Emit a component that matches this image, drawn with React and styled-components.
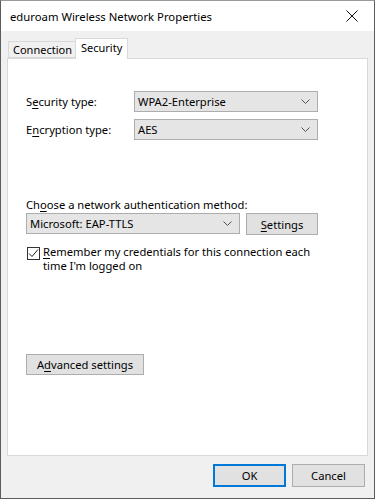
import React, { useState } from 'react';
import styled, { createGlobalStyle } from 'styled-components';

const Global = createGlobalStyle`
  html, body {
    margin: 0;
    padding: 0;
    background: #ffffff;
  }
  * {
    box-sizing: border-box;
  }
`;

const font = `'Noto Sans', 'Open Sans', sans-serif`;

const Window = styled.div`
  display: flex;
  flex-direction: column;

  width: 375px;
  height: 499px;
  border: 1px solid #5c5c5c;
  border-top-color: #9a9a9a;
  background: #f0f0f0;
  font-family: ${font};
  font-size: 11.2px;
  line-height: 15px;
  color: #000;
`;

const TitleBar = {
  Layout: styled.div`
    display: flex;
    align-items: center;
    justify-content: space-between;

    height: 30px;
    padding: 0 8px 0 9px;
    background: #ffffff;
  `,

  Text: styled.span`
    font-size: 11.3px;
  `,

  Close: styled.div`
    display: flex;
    align-items: center;
    justify-content: center;

    width: 28px;
    height: 28px;
  `,
};

const Body = styled.div`
  display: flex;
  flex-direction: column;

  flex: 1;
  padding: 7px 6px 0 6px;
`;

const Tabs = styled.div`
  display: flex;
  align-items: flex-end;

  height: 20px;
  padding-left: 1px;
`;

const Tab = styled.div`
  position: relative;
  z-index: ${({ active }) => (active ? 2 : 1)};

  height: ${({ active }) => (active ? '21px' : '17px')};
  margin-bottom: ${({ active }) => (active ? '-1px' : '0')};
  margin-left: ${({ active }) => (active ? '-1px' : '0')};
  padding: ${({ active }) => (active ? '1px 5px 0 5px' : '0 3px 0 4px')};
  border: 1px solid #d9d9d9;
  border-bottom: ${({ active }) => (active ? 'none' : '1px solid #d9d9d9')};
  background: ${({ active }) => (active ? '#ffffff' : '#f0f0f0')};
  font-size: 11px;
`;

const Panel = styled.div`
  display: flex;
  flex-direction: column;

  height: 398px;
  padding: 32px 0 0 18px;
  border: 1px solid #d9d9d9;
  background: #ffffff;
`;

const Grid = styled.div`
  display: grid;
  grid-template-columns: 108px 184px;
  row-gap: 7px;
  align-items: center;
`;

const Select = {
  Box: styled.div`
    display: flex;
    align-items: center;
    justify-content: space-between;

    width: ${({ width }) => width}px;
    height: 21px;
    padding: 0 7px 0 3px;
    border: 1px solid #adadad;
    background: #e5e5e5;
  `,

  Value: styled.span`
    line-height: 19px;
  `,
};

const Chevron = () => (
  <svg width="9" height="5" viewBox="0 0 9 5">
    <path d="M0.5 0.5 L4.5 4.5 L8.5 0.5" fill="none" stroke="#555" strokeWidth="1" />
  </svg>
);

const Dropdown = ({ value, width = 184 }) => (
  <Select.Box width={width}>
    <Select.Value>{value}</Select.Value>
    <Chevron />
  </Select.Box>
);

const Label = styled.span`
  white-space: nowrap;
`;

const Key = styled.span`
  text-decoration: underline;
  text-underline-offset: 2px;
`;

const Section = styled.div`
  display: flex;
  flex-direction: column;

  margin-top: ${({ top }) => top}px;
`;

const Row = styled.div`
  display: flex;
  gap: 6px;

  margin-top: 1px;
`;

const Button = styled.div`
  display: flex;
  align-items: center;
  justify-content: center;

  width: ${({ width }) => width}px;
  height: ${({ height }) => height || 22}px;
  border: ${({ primary }) => (primary ? '2px solid #0078d7' : '1px solid #adadad')};
  background: #e1e1e1;
`;

const Check = {
  Layout: styled.div`
    display: flex;
    gap: 3px;

    margin-top: 12px;
    padding-left: 1px;
  `,

  Box: styled.div`
    display: flex;
    align-items: center;
    justify-content: center;
    flex-shrink: 0;

    width: 13px;
    height: 13px;
    border: 1px solid #333333;
    background: #ffffff;
  `,

  Text: styled.span`
    width: 268px;
    margin-top: -2px;
    line-height: 14px;
  `,
};

const Footer = styled.div`
  display: flex;
  justify-content: flex-end;
  gap: 6px;

  padding: 8px 3px 0 0;
`;

const App = () => {
  const [remember, setRemember] = useState(true);

  return (
    <>
      <Global />
      <Window>
        <TitleBar.Layout>
          <TitleBar.Text>eduroam Wireless Network Properties</TitleBar.Text>
          <TitleBar.Close>
            <svg width="12" height="12" viewBox="0 0 12 12">
              <path d="M0.5 0.5 L11.5 11.5 M11.5 0.5 L0.5 11.5" stroke="#111" strokeWidth="1" />
            </svg>
          </TitleBar.Close>
        </TitleBar.Layout>
        <Body>
          <Tabs>
            <Tab>Connection</Tab>
            <Tab active>Security</Tab>
          </Tabs>
          <Panel>
            <Grid>
              <Label>S<Key>e</Key>curity type:</Label>
              <Dropdown value="WPA2-Enterprise" />
              <Label>E<Key>n</Key>cryption type:</Label>
              <Dropdown value="AES" />
            </Grid>
            <Section top={57}>
              <Label>Ch<Key>o</Key>ose a network authentication method:</Label>
              <Row>
                <Dropdown value="Microsoft: EAP-TTLS" width={214} />
                <Button width={72}><Key>S</Key>ettings</Button>
              </Row>
              <Check.Layout onClick={() => setRemember(!remember)}>
                <Check.Box>
                  {remember && (
                    <svg width="11" height="11" viewBox="0 0 11 11">
                      <path d="M1 5.5 L4 8.5 L10 1.5" fill="none" stroke="#222" strokeWidth="1" />
                    </svg>
                  )}
                </Check.Box>
                <Check.Text>
                  <Key>R</Key>emember my credentials for this connection each time I'm logged on
                </Check.Text>
              </Check.Layout>
            </Section>
            <Section top={81}>
              <Button width={118} height={21}>A<Key>d</Key>vanced settings</Button>
            </Section>
          </Panel>
          <Footer>
            <Button primary width={73} height={23}>OK</Button>
            <Button width={73} height={23}>Cancel</Button>
          </Footer>
        </Body>
      </Window>
    </>
  );
};

export default App;
